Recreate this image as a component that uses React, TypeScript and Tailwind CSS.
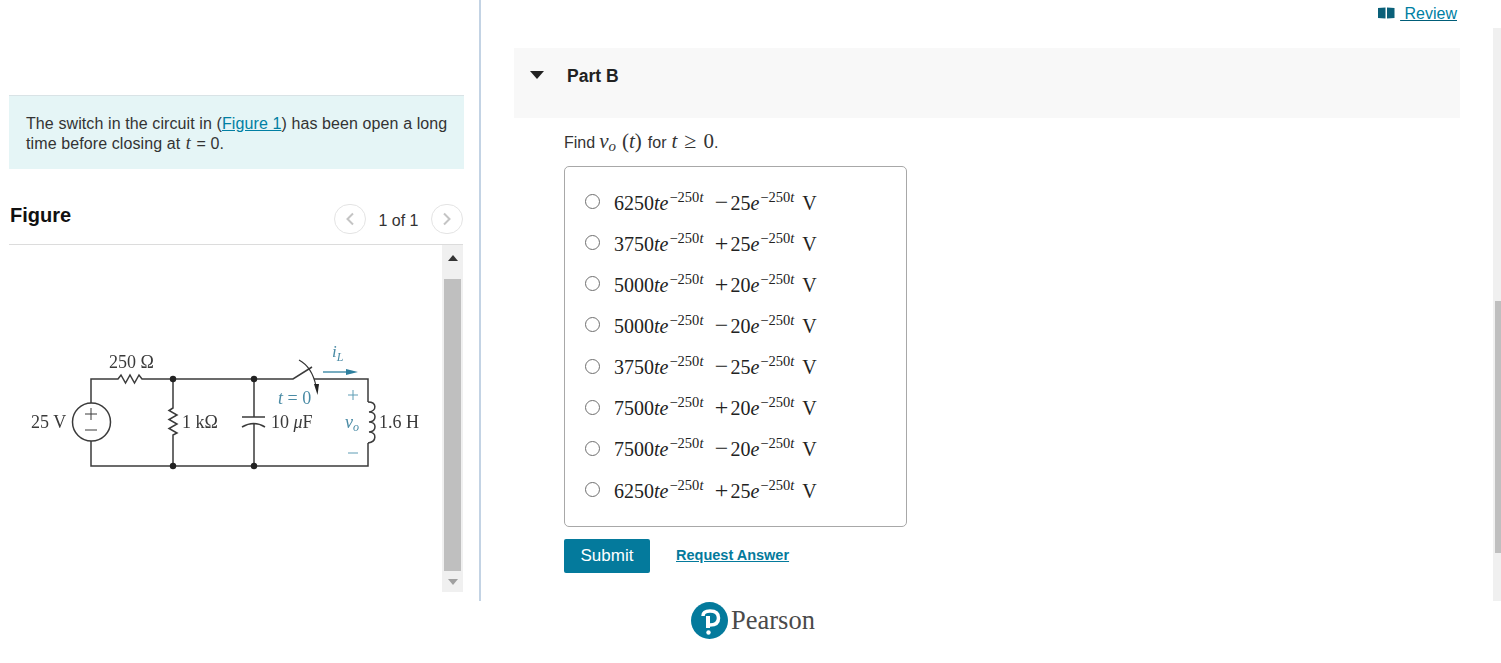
const answers = [
  ['6250', '−', '25'],
  ['3750', '+', '25'],
  ['5000', '+', '20'],
  ['5000', '−', '20'],
  ['3750', '−', '25'],
  ['7500', '+', '20'],
  ['7500', '−', '20'],
  ['6250', '+', '25'],
];

const serif = "font-['Liberation_Serif',serif]";

const Exp = () => (
  <span className="ml-px text-[14.500px] leading-none relative -top-[8px] text-[#222]">
    −250<i>t</i>
  </span>
);

const AnswerRow = ({ a, sign, b }: { a: string; sign: string; b: string }) => (
  <label className="flex items-center h-[41.15px]">
    <span className="w-[15px] h-[15px] -mt-[2px] rounded-full border-[1.500px] border-[#6f6f6f] bg-white shrink-0" />
    <span className={`${serif} ml-[14px] flex items-baseline whitespace-nowrap text-[20px] text-[#222]`}>
      <span>
        {a}
        <i>te</i>
      </span>
      <Exp />
      <span className="w-[36px] text-center text-[24px] leading-none font-light">{sign}</span>
      <span className="-ml-[9px]">
        {b}
        <i>e</i>
      </span>
      <Exp />
      <span className="ml-[8px]">V</span>
    </span>
  </label>
);

const Circuit = () => (
  <svg width="440" height="150" viewBox="0 0 440 150" className="block blur-[0.35px]">
    <g fill="none" stroke="#3b3b3b" strokeWidth="1.5">
      <path d="M91 73V49H118l3-4 4.500 8 4.500-8 4.500 8 4.500-8 3 4H293L312 37" />
      <path d="M314 49H368V72M368 113V136H91V111" />
      <circle cx="91.500" cy="92" r="19" />
      <path d="M173 49V78l-4 2.500 8 4.500-8 4.500 8 4.500-8 4.500 8 4.500-4 2V136" />
      <path d="M254 49V87M242 87H265M242 97Q254 90 265 97M254 93V136" />
      <path d="M368 72c9 0 9 9 1 10c8 0 8 9 0 10c8 0 8 9 0 10c8 0 8 10-1 11" />
      <path d="M85 84H97M91 78V90M85 100H97" strokeWidth="1" />
    </g>
    <circle cx="173" cy="49" r="3.200" fill="#222" />
    <circle cx="254" cy="49" r="3.200" fill="#222" />
    <circle cx="173" cy="136" r="3.200" fill="#222" />
    <circle cx="254" cy="136" r="3.200" fill="#222" />
    <path d="M299 30Q312 37 316 56" fill="none" stroke="#333" strokeWidth="1.200" />
    <path d="M314 54L319 54L317.500 65Z" fill="#222" />
    <path d="M323 42H348" stroke="#2d7f9e" strokeWidth="1.300" />
    <path d="M346 39L358 42L346 45Z" fill="#2d7f9e" />
    <path d="M348 65H358M353 60V70M348 123H358" stroke="#5f9db5" strokeWidth="1" />
    <g fontFamily="'Liberation Serif', serif" fontSize="18" fill="#3a3a3a">
      <text x="109" y="38">250 Ω</text>
      <text x="31" y="98">25 V</text>
      <text x="182" y="98">1 kΩ</text>
      <text x="271" y="98">10 <tspan fontStyle="italic">μ</tspan>F</text>
      <text x="379" y="98">1.6 H</text>
      <g fill="#4a8ba5">
        <text x="278" y="74"><tspan fontStyle="italic">t</tspan> = 0</text>
        <text x="345" y="98" fontStyle="italic">v<tspan fontSize="12" dy="3">o</tspan></text>
        <text x="332" y="27" fontStyle="italic" fontSize="17">i<tspan fontSize="12" dy="4">L</tspan></text>
      </g>
    </g>
  </svg>
);

const PearsonLogo = () => (
  <svg width="37" height="37" viewBox="0 0 37 37" className="shrink-0">
    <circle cx="18.500" cy="18.500" r="18.500" fill="#047a9c" />
    <path d="M12 14Q12 9 19 9Q27.500 9 27.500 16Q27.500 23 19 23" fill="none" stroke="#fff" strokeWidth="3.500" />
    <path d="M17 14V26" stroke="#fff" strokeWidth="4" />
    <circle cx="17.500" cy="30.500" r="2.200" fill="#fff" />
  </svg>
);

const App = () => {
  return (
    <div className="w-[1501px] h-[663px] overflow-hidden bg-white font-['Liberation_Sans',sans-serif] text-[#333]">
      <div className="flex h-[601px]">
        {/* Left pane */}
        <div className="w-[481px] shrink-0 pt-[95px] pl-[9px] border-r-2 border-[#c3d3e4]">
          <div className="w-[455px] h-[74px] bg-[#e5f5f6] border-t border-[#d9e3e6] pl-[17px] pr-2 pt-[18px] text-[16px] leading-[20px] tracking-[0.1px] text-[#333]">
            The switch in the circuit in (<span className="text-[#007fa3] underline">Figure 1</span>) has been open a long time
            before closing at <i className={`${serif} mx-[1px] text-[18px] leading-none`}>t</i> = 0.
          </div>
          <div className="w-[454px] h-[76px] flex items-start border-b border-[#dcdcdc] pt-[34px]">
            <h2 className="text-[20px] leading-[24px] font-bold text-[#111] ml-[1px]">Figure</h2>
            <div className="ml-auto flex items-center mt-[1px]">
              <span className="w-[32px] h-[30px] rounded-full border border-[#e4e4e4] flex items-center justify-center">
                <svg width="10" height="14" viewBox="0 0 10 14" fill="none" stroke="#c4c4c4" strokeWidth="2">
                  <path d="M8 1.500L2.500 7L8 12.500" />
                </svg>
              </span>
              <span className="mx-[12.500px] text-[16px] leading-[20px] text-[#333] relative top-[2px]">1 of 1</span>
              <span className="w-[32px] h-[30px] rounded-full border border-[#e4e4e4] flex items-center justify-center">
                <svg width="10" height="14" viewBox="0 0 10 14" fill="none" stroke="#c4c4c4" strokeWidth="2">
                  <path d="M2 1.500L7.500 7L2 12.500" />
                </svg>
              </span>
            </div>
          </div>
          <div className="flex w-[463px] h-[347px] -ml-[9px]">
            <div className="w-[442px] shrink-0 pt-[85px]">
              <Circuit />
            </div>
            <div className="w-[21px] shrink-0 h-[347px] bg-[#f0f0f0] flex flex-col items-center">
              <div className="h-[34px] flex items-center justify-center w-full">
                <span className="w-0 h-0 border-x-[5px] border-x-transparent border-b-[6px] border-b-[#333] -mt-[8px]" />
              </div>
              <div className="w-[17px] h-[292px] bg-[#bfbfbf]" />
              <div className="flex-1 flex items-center justify-center">
                <span className="w-0 h-0 border-x-[5px] border-x-transparent border-t-[6px] border-t-[#a0a0a0]" />
              </div>
            </div>
          </div>
        </div>

        {/* Right pane */}
        <div className="flex-1 min-w-0">
          <div className="h-[48px] flex justify-end pr-[36px] pt-[5px]">
            <a className="flex items-start text-[16px] leading-[18px] text-[#007fa3]">
              <svg width="17" height="12" viewBox="0 0 17 12" className="mt-[2px] mr-[5px] blur-[0.3px]">
                <path d="M0 1L7.500 0.500V11.500L0 11Z M9 0.500L16.500 1V11L9 11.500Z" fill="#0a6079" />
              </svg>
              <span className="underline decoration-[#005d78] whitespace-pre"> Review</span>
            </a>
          </div>
          <div className="ml-[33px] mr-[33px] h-[70px] bg-[#f8f8f8] flex items-start pt-[18px]">
            <span className="ml-[16px] mt-[5px] w-0 h-0 border-x-[7px] border-x-transparent border-t-[8px] border-t-[#222]" />
            <h3 className="ml-[23px] text-[17.500px] leading-[20px] font-bold text-[#222]">Part B</h3>
          </div>
          <div className="ml-[83px]">
            <p className="h-[48px] pt-[10px] flex items-baseline text-[16px] leading-[26px] whitespace-nowrap text-[#333]">
              Find
              <span className={`${serif} ml-[4px] text-[21px] flex items-baseline`}>
                <i>v</i>
                <i className="text-[15px] relative top-[3px]">o</i>
                <span className="ml-[6px]">
                  (<i>t</i>)
                </span>
              </span>
              <span className="ml-[6px]">for</span>
              <span className={`${serif} ml-[5px] text-[21px] flex items-baseline`}>
                <i>t</i>
                <span className="ml-[7px] text-[22px]">≥</span>
                <span className="ml-[7px]">0</span>
              </span>
              .
            </p>
            <div className="w-[343px] h-[361px] rounded-[5px] border border-[#a8a8a8] pt-[15px] pl-[20px]">
              {answers.map(([a, sign, b], i) => (
                <AnswerRow key={i} a={a} sign={sign} b={b} />
              ))}
            </div>
            <div className="flex items-center mt-[12px]">
              <button className="w-[86px] h-[34px] rounded-[2px] bg-[#047a9c] text-white text-[17px] leading-[20px]">
                Submit
              </button>
              <a className="ml-[26px] text-[14.500px] font-bold text-[#047a9c] underline">Request Answer</a>
            </div>
          </div>
        </div>

        {/* Page scrollbar */}
        <div className="w-[8px] shrink-0 mt-[28px] bg-[#f0f0f0] pl-[2px] pt-[273px]">
          <div className="h-[252px] bg-[#bfbfbf]" />
        </div>
      </div>
      <div className="flex items-center pl-[691px] pt-[1px]">
        <PearsonLogo />
        <span className={`${serif} ml-[3px] -mt-[2px] text-[26.500px] leading-[36px] text-[#4a4a4a]`}>Pearson</span>
      </div>
    </div>
  );
};

export default App;
